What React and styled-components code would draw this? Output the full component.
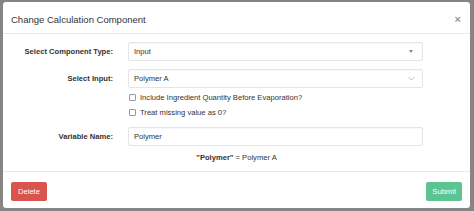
import React from "react";
import styled, { createGlobalStyle } from "styled-components";

const Global = createGlobalStyle`
  html, body { margin: 0; padding: 0; }
  body {
    width: 474px; height: 211px; overflow: hidden;
    background: #858585;
    font-family: "Liberation Sans", Arial, sans-serif;
    color: #333;
  }
`;

const Backdrop = styled.div`
  width: 474px;
  height: 211px;
  padding: 2px 4px 3px 3px;
  box-sizing: border-box;
  display: flex;
`;

const Modal = styled.div`
  flex: 1;
  background: #fff;
  border-radius: 3px;
  display: flex;
  flex-direction: column;
`;

const Header = styled.div`
  height: 31px;
  border-bottom: 1px solid #e8e8e8;
  display: flex;
  align-items: center;
  justify-content: space-between;
  padding: 0 9px 0 8px;
`;

const Title = styled.h4`
  margin: 0;
  font-size: 9.5px;
  font-weight: 400;
  color: #333;
  padding-top: 3px;
`;

const Close = styled.span`
  font-size: 11px;
  font-weight: 700;
  color: #999;
  padding-top: 2px;
`;

const Body = styled.div`
  flex: 1;
  padding: 8px 0 0 0;
  border-bottom: 1px solid #e8e8e8;
  display: flex;
  flex-direction: column;
`;

const Row = styled.div`
  display: grid;
  grid-template-columns: 110px 295px;
  column-gap: 15px;
  align-items: center;
  margin-bottom: ${p => p.mb || 8}px;
`;

const Label = styled.label`
  text-align: right;
  font-size: 7.6px;
  font-weight: 700;
  color: #333;
`;

const Field = styled.div`
  height: 19px;
  border: 1px solid #e5e5e5;
  border-radius: 2px;
  box-sizing: border-box;
  display: flex;
  align-items: center;
  justify-content: space-between;
  padding: 0 7px 0 5px;
  font-size: 7.6px;
  color: #333;
  box-shadow: inset 0 1px 1px rgba(0,0,0,0.03);
`;

const Caret = styled.span`
  width: 0; height: 0;
  border-left: 2.5px solid transparent;
  border-right: 2.5px solid transparent;
  border-top: 3px solid #888;
  margin-right: 2px;
`;

const Chevron = styled.svg`
  width: 7px; height: 5px;
`;

const Checks = styled.div`
  margin-left: 126px;
  display: flex;
  flex-direction: column;
  gap: 6px;
  margin-bottom: 10px;
`;

const CheckRow = styled.div`
  display: flex;
  align-items: center;
  gap: 4px;
  font-size: 7.6px;
  color: #333;
`;

const Box = styled.span`
  width: 5px; height: 5px;
  border: 1px solid #999;
  border-radius: 1px;
  background: #fff;
`;

const Formula = styled.div`
  text-align: center;
  font-size: 7.6px;
  color: #333;
  margin-top: 0px;
  b { font-weight: 700; }
`;

const Footer = styled.div`
  height: 36px;
  display: flex;
  align-items: center;
  justify-content: space-between;
  padding: 0 8px 0 8px;
`;

const Button = styled.button`
  height: 19px;
  border: none;
  border-radius: 2px;
  padding: 0 ${p => p.px || 7}px;
  font-family: "Liberation Sans", Arial, sans-serif;
  font-size: 7.6px;
  color: #fff;
  background: ${p => p.bg};
  margin-top: 2px;
`;

export default function App() {
  return (
    <>
      <Global />
      <Backdrop>
        <Modal>
          <Header>
            <Title>Change Calculation Component</Title>
            <Close>×</Close>
          </Header>
          <Body>
            <Row>
              <Label>Select Component Type:</Label>
              <Field>
                <span>Input</span>
                <Caret />
              </Field>
            </Row>
            <Row mb={5}>
              <Label>Select Input:</Label>
              <Field>
                <span>Polymer A</span>
                <Chevron viewBox="0 0 7 5">
                  <path d="M0.5 1 L3.5 4 L6.5 1" fill="none" stroke="#bbb" strokeWidth="1" />
                </Chevron>
              </Field>
            </Row>
            <Checks>
              <CheckRow><Box />Include Ingredient Quantity Before Evaporation?</CheckRow>
              <CheckRow><Box />Treat missing value as 0?</CheckRow>
            </Checks>
            <Row mb={7}>
              <Label>Variable Name:</Label>
              <Field><span>Polymer</span></Field>
            </Row>
            <Formula><b>"Polymer"</b> = Polymer A</Formula>
          </Body>
          <Footer>
            <Button bg="#d9534f">Delete</Button>
            <Button bg="#5cc48f" px={6}>Submit</Button>
          </Footer>
        </Modal>
      </Backdrop>
    </>
  );
}
